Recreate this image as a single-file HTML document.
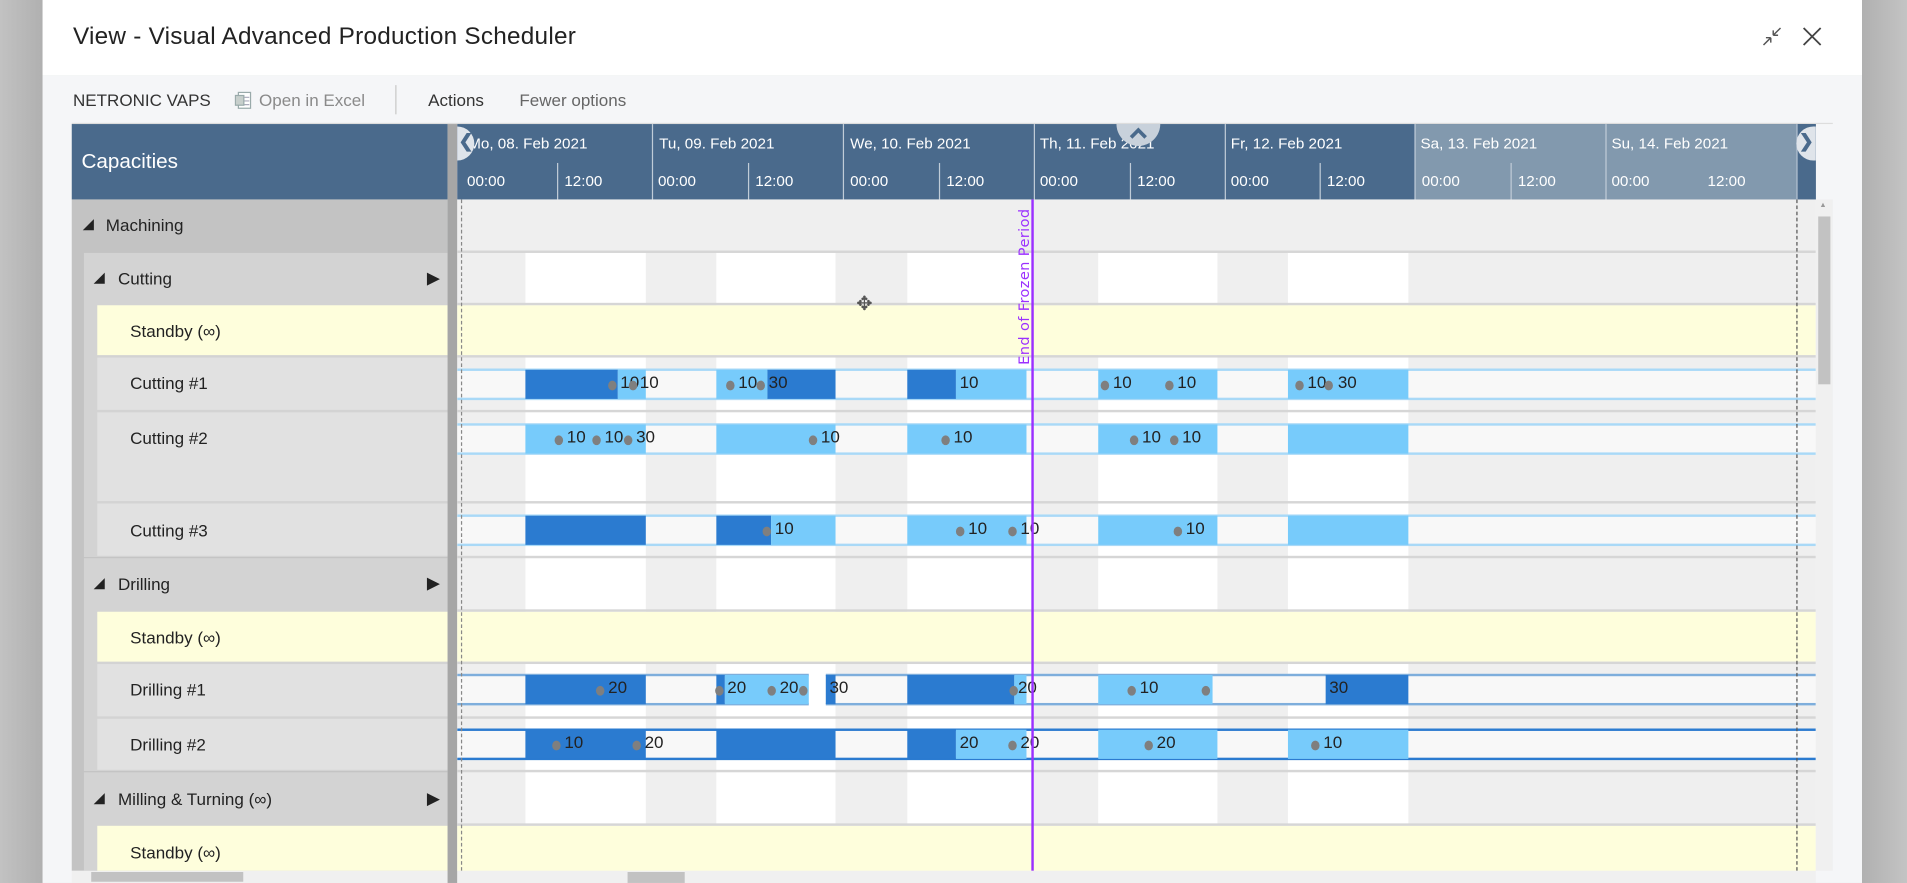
<!DOCTYPE html>
<html><head><meta charset="utf-8"><style>
*{margin:0;padding:0;box-sizing:border-box}
html,body{width:1907px;height:883px;overflow:hidden;background:#c6c6c6}
#w{position:absolute;left:0;top:0;width:1568px;height:726px;transform:scale(1.21620);transform-origin:0 0;font-family:"Segoe UI","Liberation Sans",sans-serif;color:#222}
.a{position:absolute}
.t{position:absolute;white-space:nowrap}
.hd{color:#fff;font-size:12.5px}
.wc{position:absolute;top:207px;height:471px;background:#fff}
.band{position:absolute;left:376px;width:1117px;height:26px;background:#f8f8f8;border-top:2px solid #a9d9f7;border-bottom:2px solid #a9d9f7}
.d{position:absolute;background:#2b7bd0}
.l{position:absolute;background:#77cbfb}
.dot{position:absolute;width:7px;height:8px;border-radius:50%;background:#7f7f7f}
.lb{position:absolute;font-size:14px;color:#222;line-height:16px}
.rl{position:absolute;left:376px;width:1117px;height:2px;background:#d6d6d6}
.lt{position:absolute;font-size:14px;color:#222;white-space:nowrap}
</style></head><body><div id="w">
<div class="a" style="left:0;top:0;width:35px;height:726px;background:linear-gradient(90deg,#c2c2c2,#b0b0b0)"></div>
<div class="a" style="left:1531px;top:0;width:37px;height:726px;background:linear-gradient(90deg,#b0b0b0,#c4c4c4)"></div>
<div class="a" style="left:35px;top:0;width:1496px;height:62px;background:#fff"></div>
<div class="a" style="left:35px;top:62px;width:1496px;height:664px;background:#f5f6f8"></div>
<div class="t" style="left:60px;top:19px;font-size:20px;color:#222;letter-spacing:0.2px">View - Visual Advanced Production Scheduler</div>
<svg class="a" style="left:1448px;top:21px" width="18" height="18" viewBox="0 0 18 18" fill="none" stroke="#555" stroke-width="1.2"><path d="M10 8L16 2M10 8V4M10 8H14M8 10L2 16M8 10V14M8 10H4"/></svg>
<svg class="a" style="left:1481px;top:21px" width="18" height="18" viewBox="0 0 18 18" stroke="#444" stroke-width="1.5"><path d="M2 2L16 16M16 2L2 16"/></svg>
<div class="t" style="left:60px;top:74px;font-size:14px;color:#333">NETRONIC VAPS</div>
<svg class="a" style="left:193px;top:75px" width="14" height="15" viewBox="0 0 14 15"><rect x="3" y="1" width="10" height="13" fill="#fff" stroke="#9aa" /><rect x="0.5" y="3.5" width="7" height="8" fill="#c7cfcc" stroke="#9aa"/><path d="M8 5h4M8 8h4M8 11h4" stroke="#aab"/></svg>
<div class="t" style="left:213px;top:74px;font-size:14px;color:#8a8a8a">Open in Excel</div>
<div class="a" style="left:325px;top:70px;width:1px;height:24px;background:#c8c8c8"></div>
<div class="t" style="left:352px;top:74px;font-size:14px;color:#333">Actions</div>
<div class="t" style="left:427px;top:74px;font-size:14px;color:#666">Fewer options</div>
<div class="a" style="left:59px;top:101px;width:1448px;height:1px;background:#ddd"></div>
<!-- left panel -->
<div class="a" style="left:59px;top:102px;width:309px;height:62px;background:#4a6a8c"></div>
<div class="t" style="left:67px;top:123px;font-size:17px;color:#fff">Capacities</div>
<div class="a" style="left:59px;top:164px;width:309px;height:552px;background:#c3c3c3"></div>
<div class="a" style="left:69px;top:208px;width:299px;height:250px;background:#d3d3d3"></div>
<div class="a" style="left:69px;top:459px;width:299px;height:175px;background:#d3d3d3"></div>
<div class="a" style="left:69px;top:635px;width:299px;height:81px;background:#d3d3d3"></div>
<div class="a" style="left:80px;top:251px;width:288px;height:41px;background:#fefedc"></div>
<div class="a" style="left:80px;top:294px;width:288px;height:43px;background:#e1e1e1"></div>
<div class="a" style="left:80px;top:339px;width:288px;height:73px;background:#e1e1e1"></div>
<div class="a" style="left:80px;top:414px;width:288px;height:43px;background:#e1e1e1"></div>
<div class="a" style="left:80px;top:503px;width:288px;height:41px;background:#fefedc"></div>
<div class="a" style="left:80px;top:546px;width:288px;height:43px;background:#e1e1e1"></div>
<div class="a" style="left:80px;top:591px;width:288px;height:42px;background:#e1e1e1"></div>
<div class="a" style="left:80px;top:679px;width:288px;height:37px;background:#fefedc"></div>
<div class="lt" style="left:68px;top:177px;font-size:12px">◢</div><div class="lt" style="left:87px;top:177px">Machining</div>
<div class="lt" style="left:77px;top:221px;font-size:12px">◢</div><div class="lt" style="left:97px;top:221px">Cutting</div><div class="lt" style="left:351px;top:220px">▶</div>
<div class="lt" style="left:107px;top:264px">Standby (∞)</div>
<div class="lt" style="left:107px;top:307px">Cutting #1</div>
<div class="lt" style="left:107px;top:352px">Cutting #2</div>
<div class="lt" style="left:107px;top:428px">Cutting #3</div>
<div class="lt" style="left:77px;top:472px;font-size:12px">◢</div><div class="lt" style="left:97px;top:472px">Drilling</div><div class="lt" style="left:351px;top:471px">▶</div>
<div class="lt" style="left:107px;top:516px">Standby (∞)</div>
<div class="lt" style="left:107px;top:559px">Drilling #1</div>
<div class="lt" style="left:107px;top:604px">Drilling #2</div>
<div class="lt" style="left:77px;top:649px;font-size:12px">◢</div><div class="lt" style="left:97px;top:649px">Milling &amp; Turning (∞)</div><div class="lt" style="left:351px;top:648px">▶</div>
<div class="lt" style="left:107px;top:693px">Standby (∞)</div>
<div class="a" style="left:59px;top:716px;width:309px;height:10px;background:#f0f0f0"></div>
<div class="a" style="left:75px;top:717px;width:125px;height:8px;background:#c2c2c2"></div>
<div class="a" style="left:368px;top:102px;width:8px;height:624px;background:#a6a6a6"></div>
<!-- timeline header -->
<div class="a" style="left:376px;top:102px;width:1117px;height:62px;background:#4a6a8c"></div>
<div class="a" style="left:1163px;top:102px;width:314px;height:62px;background:#8299ae"></div>
<div class="a" style="left:1477px;top:102px;width:16px;height:62px;background:#4a6a8c"></div>
<div class="a" style="left:536px;top:102px;width:1px;height:62px;background:#c0ccd8"></div>
<div class="a" style="left:693px;top:102px;width:1px;height:62px;background:#c0ccd8"></div>
<div class="a" style="left:850px;top:102px;width:1px;height:62px;background:#c0ccd8"></div>
<div class="a" style="left:1007px;top:102px;width:1px;height:62px;background:#c0ccd8"></div>
<div class="a" style="left:1163px;top:102px;width:1px;height:62px;background:#c0ccd8"></div>
<div class="a" style="left:1320px;top:102px;width:1px;height:62px;background:#c0ccd8"></div>
<div class="a" style="left:1477px;top:102px;width:1px;height:62px;background:#c0ccd8"></div>
<div class="a" style="left:458px;top:134px;width:1px;height:30px;background:#c0ccd8"></div>
<div class="a" style="left:615px;top:134px;width:1px;height:30px;background:#c0ccd8"></div>
<div class="a" style="left:772px;top:134px;width:1px;height:30px;background:#c0ccd8"></div>
<div class="a" style="left:929px;top:134px;width:1px;height:30px;background:#c0ccd8"></div>
<div class="a" style="left:1085px;top:134px;width:1px;height:30px;background:#c0ccd8"></div>
<div class="a" style="left:1242px;top:134px;width:1px;height:30px;background:#c0ccd8"></div>
<div class="t hd" style="left:385px;top:111px">Mo, 08. Feb 2021</div>
<div class="t hd" style="left:542px;top:111px">Tu, 09. Feb 2021</div>
<div class="t hd" style="left:699px;top:111px">We, 10. Feb 2021</div>
<div class="t hd" style="left:855px;top:111px">Th, 11. Feb 2021</div>
<div class="t hd" style="left:1012px;top:111px">Fr, 12. Feb 2021</div>
<div class="t hd" style="left:1168px;top:111px">Sa, 13. Feb 2021</div>
<div class="t hd" style="left:1325px;top:111px">Su, 14. Feb 2021</div>
<div class="t hd" style="left:384px;top:142px">00:00</div><div class="t hd" style="left:464px;top:142px">12:00</div>
<div class="t hd" style="left:541px;top:142px">00:00</div><div class="t hd" style="left:621px;top:142px">12:00</div>
<div class="t hd" style="left:699px;top:142px">00:00</div><div class="t hd" style="left:778px;top:142px">12:00</div>
<div class="t hd" style="left:855px;top:142px">00:00</div><div class="t hd" style="left:935px;top:142px">12:00</div>
<div class="t hd" style="left:1012px;top:142px">00:00</div><div class="t hd" style="left:1091px;top:142px">12:00</div>
<div class="t hd" style="left:1169px;top:142px">00:00</div><div class="t hd" style="left:1248px;top:142px">12:00</div>
<div class="t hd" style="left:1325px;top:142px">00:00</div><div class="t hd" style="left:1404px;top:142px">12:00</div>
<div class="a" style="left:376px;top:104px;width:14px;height:28px;border-radius:0 14px 14px 0;background:#dfe4ea"></div>
<div class="t" style="left:377px;top:107px;font-size:15px;font-weight:bold;color:#4a6a8c">❮</div>
<div class="a" style="left:1477px;top:104px;width:16px;height:28px;border-radius:14px 0 0 14px;background:#dfe4ea"></div>
<div class="t" style="left:1479px;top:107px;font-size:15px;font-weight:bold;color:#4a6a8c">❯</div>
<div class="a" style="left:918px;top:102px;width:36px;height:18px;border-radius:0 0 18px 18px;background:#c8d1db"></div>
<svg class="a" style="left:927px;top:103px" width="18" height="12"><path d="M3 10L9 4L15 10" stroke="#4a6a8c" stroke-width="3" fill="none"/></svg>
<!-- chart -->
<div class="a" style="left:376px;top:164px;width:1117px;height:552px;background:#efefef"></div>
<div class="wc" style="left:432px;width:99px"></div>
<div class="wc" style="left:589px;width:98px"></div>
<div class="wc" style="left:746px;width:104px"></div>
<div class="wc" style="left:903px;width:98px"></div>
<div class="wc" style="left:1059px;width:99px"></div>
<div class="a" style="left:376px;top:251px;width:1117px;height:41px;background:#fefedc"></div>
<div class="a" style="left:376px;top:503px;width:1117px;height:41px;background:#fefedc"></div>
<div class="a" style="left:376px;top:679px;width:1117px;height:37px;background:#fefedc"></div>
<div class="rl" style="top:206px"></div><div class="rl" style="top:249px"></div><div class="rl" style="top:292px"></div><div class="rl" style="top:337px"></div><div class="rl" style="top:412px"></div><div class="rl" style="top:457px"></div><div class="rl" style="top:501px"></div><div class="rl" style="top:544px"></div><div class="rl" style="top:589px"></div><div class="rl" style="top:633px"></div><div class="rl" style="top:677px"></div>
<!-- bands -->
<div class="band" style="top:303px"></div>
<div class="band" style="top:348px"></div>
<div class="band" style="top:423px"></div>
<div class="band" style="top:554px;border-color:#7eaedc"></div>
<div class="band" style="top:599px;border-color:#2b7bd0"></div>
<div class="a" style="left:665px;top:553px;width:14px;height:28px;background:#fff"></div>
<!-- Cutting #1 -->
<div class="d" style="left:432px;top:304px;width:76px;height:24px"></div><div class="l" style="left:508px;top:304px;width:23px;height:24px"></div>
<div class="l" style="left:589px;top:304px;width:42px;height:24px"></div><div class="d" style="left:631px;top:304px;width:56px;height:24px"></div>
<div class="d" style="left:746px;top:304px;width:40px;height:24px"></div><div class="l" style="left:786px;top:304px;width:58px;height:24px"></div>
<div class="l" style="left:903px;top:304px;width:98px;height:24px"></div><div class="l" style="left:1059px;top:304px;width:99px;height:24px"></div>
<div class="dot" style="left:500px;top:313px"></div><div class="lb" style="left:510px;top:306px">10</div>
<div class="dot" style="left:517px;top:313px"></div><div class="lb" style="left:526px;top:306px">10</div>
<div class="dot" style="left:597px;top:313px"></div><div class="lb" style="left:607px;top:306px">10</div>
<div class="dot" style="left:622px;top:313px"></div><div class="lb" style="left:632px;top:306px">30</div>
<div class="lb" style="left:789px;top:306px">10</div>
<div class="dot" style="left:905px;top:313px"></div><div class="lb" style="left:915px;top:306px">10</div>
<div class="dot" style="left:958px;top:313px"></div><div class="lb" style="left:968px;top:306px">10</div>
<div class="dot" style="left:1065px;top:313px"></div><div class="lb" style="left:1075px;top:306px">10</div>
<div class="dot" style="left:1089px;top:313px"></div><div class="lb" style="left:1100px;top:306px">30</div>
<!-- Cutting #2 -->
<div class="l" style="left:432px;top:349px;width:99px;height:24px"></div><div class="l" style="left:589px;top:349px;width:98px;height:24px"></div>
<div class="l" style="left:746px;top:349px;width:98px;height:24px"></div><div class="l" style="left:903px;top:349px;width:98px;height:24px"></div><div class="l" style="left:1059px;top:349px;width:99px;height:24px"></div>
<div class="dot" style="left:456px;top:358px"></div><div class="lb" style="left:466px;top:351px">10</div>
<div class="dot" style="left:487px;top:358px"></div><div class="lb" style="left:497px;top:351px">10</div>
<div class="dot" style="left:513px;top:358px"></div><div class="lb" style="left:523px;top:351px">30</div>
<div class="dot" style="left:665px;top:358px"></div><div class="lb" style="left:675px;top:351px">10</div>
<div class="dot" style="left:774px;top:358px"></div><div class="lb" style="left:784px;top:351px">10</div>
<div class="dot" style="left:929px;top:358px"></div><div class="lb" style="left:939px;top:351px">10</div>
<div class="dot" style="left:962px;top:358px"></div><div class="lb" style="left:972px;top:351px">10</div>
<!-- Cutting #3 -->
<div class="d" style="left:432px;top:424px;width:99px;height:24px"></div><div class="d" style="left:589px;top:424px;width:45px;height:24px"></div><div class="l" style="left:634px;top:424px;width:53px;height:24px"></div>
<div class="l" style="left:746px;top:424px;width:98px;height:24px"></div><div class="l" style="left:903px;top:424px;width:98px;height:24px"></div><div class="l" style="left:1059px;top:424px;width:99px;height:24px"></div>
<div class="dot" style="left:627px;top:433px"></div><div class="lb" style="left:637px;top:426px">10</div>
<div class="dot" style="left:786px;top:433px"></div><div class="lb" style="left:796px;top:426px">10</div>
<div class="dot" style="left:829px;top:433px"></div><div class="lb" style="left:839px;top:426px">10</div>
<div class="dot" style="left:965px;top:433px"></div><div class="lb" style="left:975px;top:426px">10</div>
<!-- Drilling #1 -->
<div class="d" style="left:432px;top:555px;width:99px;height:24px"></div><div class="d" style="left:589px;top:555px;width:7px;height:24px"></div><div class="l" style="left:596px;top:555px;width:69px;height:24px"></div>
<div class="d" style="left:679px;top:555px;width:8px;height:24px"></div><div class="d" style="left:746px;top:555px;width:88px;height:24px"></div><div class="l" style="left:834px;top:555px;width:10px;height:24px"></div>
<div class="l" style="left:903px;top:555px;width:94px;height:24px"></div><div class="d" style="left:1090px;top:555px;width:68px;height:24px"></div>
<div class="dot" style="left:490px;top:564px"></div><div class="lb" style="left:500px;top:557px">20</div>
<div class="dot" style="left:588px;top:564px"></div><div class="lb" style="left:598px;top:557px">20</div>
<div class="dot" style="left:631px;top:564px"></div><div class="lb" style="left:641px;top:557px">20</div>
<div class="dot" style="left:657px;top:564px"></div><div class="lb" style="left:682px;top:557px">30</div>
<div class="dot" style="left:830px;top:564px"></div><div class="lb" style="left:837px;top:557px">20</div>
<div class="dot" style="left:927px;top:564px"></div><div class="lb" style="left:937px;top:557px">10</div>
<div class="dot" style="left:988px;top:564px"></div><div class="lb" style="left:1093px;top:557px">30</div>
<!-- Drilling #2 -->
<div class="d" style="left:432px;top:600px;width:99px;height:24px"></div><div class="d" style="left:589px;top:600px;width:98px;height:24px"></div>
<div class="d" style="left:746px;top:600px;width:40px;height:24px"></div><div class="l" style="left:786px;top:600px;width:58px;height:24px"></div>
<div class="l" style="left:903px;top:600px;width:98px;height:24px"></div><div class="l" style="left:1059px;top:600px;width:99px;height:24px"></div>
<div class="dot" style="left:454px;top:609px"></div><div class="lb" style="left:464px;top:602px">10</div>
<div class="dot" style="left:520px;top:609px"></div><div class="lb" style="left:530px;top:602px">20</div>
<div class="lb" style="left:789px;top:602px">20</div>
<div class="dot" style="left:829px;top:609px"></div><div class="lb" style="left:839px;top:602px">20</div>
<div class="dot" style="left:941px;top:609px"></div><div class="lb" style="left:951px;top:602px">20</div>
<div class="dot" style="left:1078px;top:609px"></div><div class="lb" style="left:1088px;top:602px">10</div>
<!-- dashed lines, frozen -->
<div class="a" style="left:379px;top:164px;height:552px;border-left:1px dashed #888"></div>
<div class="a" style="left:1477px;top:164px;height:552px;border-left:1px dashed #555"></div>
<div class="a" style="left:848px;top:164px;width:2px;height:552px;background:#9b30ff"></div>
<div class="t" style="left:843px;top:168px;font-size:12px;color:#9b30ff;transform-origin:0 0;transform:rotate(-90deg) translate(-132px,-8px);letter-spacing:0.3px;font-family:'DejaVu Sans',sans-serif">End of Frozen Period</div>
<div class="t" style="left:704px;top:240px;font-size:16px;color:#555">✥</div>
<!-- scrollbars -->
<div class="a" style="left:1493px;top:164px;width:14px;height:552px;background:#f0f0f0"></div>
<div class="a" style="left:1495px;top:178px;width:10px;height:138px;background:#c2c2c2"></div>
<div class="t" style="left:1496px;top:166px;font-size:6px;color:#999">▲</div>
<div class="a" style="left:376px;top:716px;width:1117px;height:10px;background:#f0f0f0"></div>
<div class="a" style="left:516px;top:717px;width:47px;height:9px;background:#c2c2c2"></div>
</div></body></html>
